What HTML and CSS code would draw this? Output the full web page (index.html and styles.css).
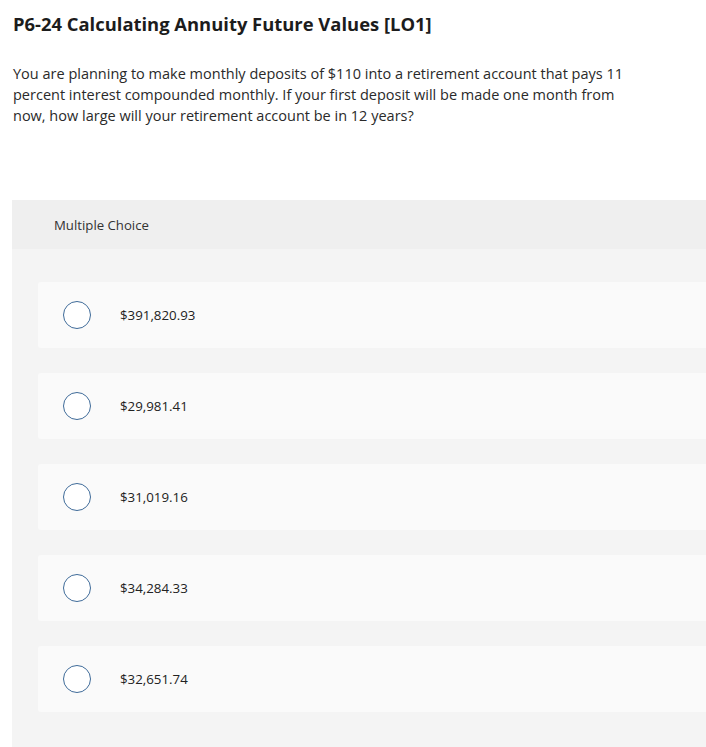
FILE: index.html
```html
<!DOCTYPE html>
<html lang="en">
<head>
    <meta charset="UTF-8">
    <meta name="viewport" content="width=device-width, initial-scale=1.0">
    <title>P6-24 Calculating Annuity Future Values</title>
    <link rel="stylesheet" href="styles.css">
</head>
<body>
    <div class="question">
        <h1>P6-24 Calculating Annuity Future Values [LO1]</h1>
        <p class="prompt">You are planning to make monthly deposits of $110 into a retirement account that pays 11 percent interest compounded monthly. If your first deposit will be made one month from now, how large will your retirement account be in 12 years?</p>
    </div>

    <div class="answers">
        <div class="answers-head">Multiple Choice</div>
        <div class="choices">
            <label class="choice"><span class="radio"></span><span class="value">$391,820.93</span></label>
            <label class="choice"><span class="radio"></span><span class="value">$29,981.41</span></label>
            <label class="choice"><span class="radio"></span><span class="value">$31,019.16</span></label>
            <label class="choice"><span class="radio"></span><span class="value">$34,284.33</span></label>
            <label class="choice"><span class="radio"></span><span class="value">$32,651.74</span></label>
        </div>
    </div>
</body>
</html>
```

FILE: styles.css
```css
body {
    font-family: "Open Sans", Lato, Arial, sans-serif;
    background-color: #fff;
    color: #222;
    margin: 0;
    padding: 0;
}

.question {
    padding: 0 13px;
}

h1 {
    font-size: 18.4px;
    font-weight: bold;
    margin: 12px 0 0;
    line-height: 24px;
    color: #1c1c1c;
}

.prompt {
    font-size: 14.5px;
    line-height: 21px;
    margin: 27px 0 0;
    max-width: 624px;
    color: #2a2a2a;
}

.answers {
    margin: 74px 0 0 12px;
    background-color: #f4f4f4;
}

.answers-head {
    background-color: #efefef;
    height: 49px;
    line-height: 50px;
    padding-left: 42px;
    font-size: 13.2px;
    color: #333;
}

.choices {
    padding: 33px 0 50px 26px;
    display: flex;
    flex-direction: column;
    gap: 25px;
}

.choice {
    display: flex;
    align-items: center;
    height: 66px;
    background-color: #fafafa;
    border-radius: 3px 0 0 3px;
    padding-left: 25px;
    cursor: pointer;
}

.radio {
    width: 26px;
    height: 26px;
    border: 1.5px solid #3f6b99;
    border-radius: 50%;
    background-color: #fff;
    flex-shrink: 0;
}

.value {
    margin-left: 29px;
    font-size: 13.3px;
    letter-spacing: 0;
    color: #222;
}
```
